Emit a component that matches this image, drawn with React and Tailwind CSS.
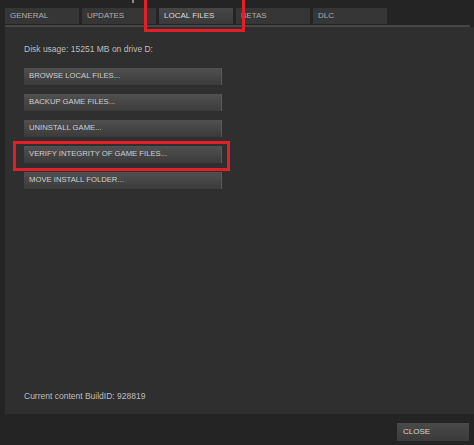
import React from "react";

const font = { fontFamily: '"Liberation Sans", Arial, sans-serif' };

function Tab({ label, active }) {
  return (
    <div
      className={
        "w-[74px] h-[16px] flex items-center pl-[5px] text-[8px] leading-none " +
        (active
          ? "bg-gradient-to-b from-[#474747] to-[#3a3a3a] text-[#dcdcdc]"
          : "bg-[#363636] text-[#adadad]")
      }
    >
      {label}
    </div>
  );
}

function Btn({ label }) {
  return (
    <div className="w-[198px] h-[17px] flex items-center pl-[5px] text-[7.7px] leading-none text-[#cfcfcf] bg-gradient-to-b from-[#505050] to-[#3b3b3b] shadow-[inset_-1px_0_0_#5a5a5a]">
      {label}
    </div>
  );
}

export default function App() {
  return (
    <div className="w-[474px] h-[445px] bg-[#242424] relative overflow-hidden" style={font}>
      <div className="pt-[8px] pl-[5px] flex gap-[3px]">
        <Tab label="GENERAL" />
        <Tab label="UPDATES" />
        <Tab label="LOCAL FILES" active />
        <Tab label="BETAS" />
        <Tab label="DLC" />
      </div>
      <div className="h-[2px] ml-[5px] mr-[4px] mt-[1px] bg-[#474747]" />
      <div className="ml-[5px] h-[387px] bg-[#2f2f2f] flex flex-col pl-[19px]">
        <div className="mt-[18px] text-[8.5px] leading-none text-[#bdbdbd]">
          Disk usage: 15251 MB on drive D:
        </div>
        <div className="mt-[14px] flex flex-col gap-[9px]">
          <Btn label="BROWSE LOCAL FILES..." />
          <Btn label="BACKUP GAME FILES..." />
          <Btn label="UNINSTALL GAME..." />
          <Btn label="VERIFY INTEGRITY OF GAME FILES..." />
          <Btn label="MOVE INSTALL FOLDER..." />
        </div>
        <div className="mt-auto mb-[14px] text-[8.5px] leading-none text-[#bdbdbd]">
          Current content BuildID: 928819
        </div>
      </div>
      <div className="flex justify-end pr-[5px] pt-[9px]">
        <div className="w-[72px] h-[18px] flex items-center pl-[6px] text-[8px] leading-none text-[#d4d4d4] bg-gradient-to-b from-[#4a4a4a] to-[#3a3a3a]">
          CLOSE
        </div>
      </div>
      {/* small mark at top */}
      <div className="absolute left-[132px] top-0 w-[2px] h-[3px] bg-[#8a8a8a]" />
      {/* red highlight boxes */}
      <div className="absolute left-[144px] top-[-3px] w-[101px] h-[35px] border-[3px] border-[#e3202a]" />
      <div className="absolute left-[13px] top-[141px] w-[217px] h-[30px] border-[3px] border-[#e3202a]" />
    </div>
  );
}
